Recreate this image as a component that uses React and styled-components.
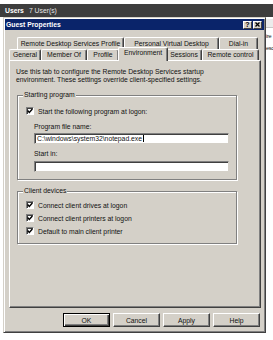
import React from "react";
import styled, { createGlobalStyle } from "styled-components";

const Global = createGlobalStyle`
  html, body { margin: 0; padding: 0; background: #fff; }
  body {
    font-family: Tahoma, "Liberation Sans", Arial, sans-serif;
    font-size: 6.8px;
    color: #111;
  }
`;

const Page = styled.div`
  width: 273px;
  height: 340px;
  overflow: hidden;
  background: #fff;
  padding-top: 4px;
  box-sizing: border-box;
`;

const TopBar = styled.div`
  height: 13px;
  background: #3d3d3d;
  display: flex;
  align-items: center;
  gap: 5px;
  padding-left: 5px;
  color: #fff;
  white-space: nowrap;
`;

const BarTitle = styled.span`
  font-weight: bold;
`;

const BarCount = styled.span`
  color: #e6e6e6;
`;

const Main = styled.div`
  display: flex;
  align-items: flex-start;
`;

const Dialog = styled.div`
  margin-left: 3px;
  width: 263px;
  box-sizing: border-box;
  background: #d4d0c8;
  border: 1px solid;
  border-color: #d4d0c8 #404040 #404040 #d4d0c8;
  box-shadow: inset 1px 1px 0 #fff, inset -1px -1px 0 #808080;
  padding: 1px;
  display: flex;
  flex-direction: column;
`;

const TitleBar = styled.div`
  height: 11px;
  background: #0a246a;
  display: flex;
  align-items: center;
  justify-content: space-between;
  padding: 0 2px 0 1px;
`;

const TitleText = styled.span`
  color: #fff;
  font-weight: bold;
  white-space: nowrap;
`;

const TitleButtons = styled.div`
  display: flex;
  gap: 1px;
`;

const TitleButton = styled.div`
  width: 9px;
  height: 8px;
  box-sizing: border-box;
  background: #d4d0c8;
  border: 1px solid;
  border-color: #fff #404040 #404040 #fff;
  display: flex;
  align-items: center;
  justify-content: center;
  font-weight: bold;
  font-size: 7px;
  line-height: 1;
  color: #000;
`;

const Body = styled.div`
  padding: 7px 3px 4px 4px;
  display: flex;
  flex-direction: column;
`;

const TabRow = styled.div`
  display: flex;
  height: ${(p) => p.$h}px;
  padding-left: ${(p) => p.$indent}px;
  align-items: flex-start;
`;

const Tab = styled.div`
  width: ${(p) => (p.$active ? p.$w + 3 : p.$w)}px;
  height: ${(p) => (p.$active ? p.$h + 3 : p.$h)}px;
  margin: ${(p) => (p.$active ? "-2px -2px -1px -1px" : "0")};
  position: relative;
  z-index: ${(p) => (p.$active ? 2 : 1)};
  box-sizing: border-box;
  background: #d4d0c8;
  border-top: 1px solid #fff;
  border-left: 1px solid #fff;
  border-right: 1px solid #404040;
  box-shadow: inset -1px 0 0 #808080;
  border-radius: 2px 2px 0 0;
  display: flex;
  align-items: ${(p) => (p.$active ? "flex-start" : "center")};
  padding-top: ${(p) => (p.$active ? "1px" : "0")};
  justify-content: center;
  white-space: nowrap;
  line-height: 8px;
`;

const Panel = styled.div`
  height: 248px;
  box-sizing: border-box;
  border: 1px solid;
  border-color: #fff #404040 #404040 #fff;
  box-shadow: inset -1px -1px 0 #808080;
  padding: 7px 6px 0 6px;
  display: flex;
  flex-direction: column;
`;

const Description = styled.p`
  margin: 0;
  line-height: 8px;
  white-space: nowrap;
`;

const GroupBox = styled.div`
  position: relative;
  margin: ${(p) => p.$top}px 0 0 1px;
  width: 220px;
  box-sizing: border-box;
  border: 1px solid #808080;
  box-shadow: inset 1px 1px 0 #fff, 1px 1px 0 #fff;
  padding: ${(p) => p.$pad};
  display: flex;
  flex-direction: column;
`;

const GroupTitle = styled.span`
  position: absolute;
  top: -5px;
  left: 5px;
  padding: 0 1px;
  background: #d4d0c8;
  line-height: 8px;
  white-space: nowrap;
`;

const CheckRow = styled.label`
  display: flex;
  align-items: center;
  gap: 4px;
  height: 8px;
  margin-top: ${(p) => p.$gap || 0}px;
  white-space: nowrap;
`;

const CheckBox = styled.span`
  width: 8px;
  height: 8px;
  box-sizing: border-box;
  background: #fff;
  border: 1px solid;
  border-color: #808080 #fff #fff #808080;
  box-shadow: inset 1px 1px 0 #404040;
  display: flex;
  align-items: center;
  justify-content: center;
  flex: none;
`;

const FieldLabel = styled.div`
  margin: ${(p) => p.$top}px 0 0 8px;
  line-height: 8px;
  white-space: nowrap;
`;

const TextBox = styled.div`
  margin: ${(p) => p.$top}px 0 0 8px;
  width: 195px;
  height: 11px;
  box-sizing: border-box;
  background: #fff;
  border: 1px solid;
  border-color: #808080 #d4d0c8 #d4d0c8 #808080;
  box-shadow: inset 1px 1px 0 #404040;
  padding: 0 1px 0 2px;
  display: flex;
  align-items: center;
  white-space: nowrap;
  line-height: 8px;
`;

const Caret = styled.span`
  display: inline-block;
  width: 1px;
  height: 7px;
  background: #000;
  margin-left: 1px;
`;

const ButtonRow = styled.div`
  display: flex;
  justify-content: flex-end;
  gap: 3px;
  margin-top: 5px;
  padding-right: 1px;
`;

const Button = styled.div`
  width: 47px;
  height: 14px;
  box-sizing: border-box;
  background: #d4d0c8;
  border: 1px solid;
  border-color: ${(p) => (p.$default ? "#000" : "#fff #404040 #404040 #fff")};
  box-shadow: ${(p) =>
    p.$default
      ? "inset 1px 1px 0 #fff, inset -1px -1px 0 #404040, inset -2px -2px 0 #808080"
      : "inset -1px -1px 0 #808080"};
  display: flex;
  align-items: center;
  justify-content: center;
`;

const Side = styled.div`
  flex: 1;
  align-self: stretch;
  display: flex;
  flex-direction: column;
  overflow: hidden;
  padding-top: 2px;
  font-size: 5.5px;
`;

const SideHeader = styled.div`
  height: 8px;
  background: #ebebeb;
  border-bottom: 1px solid #c8c8c8;
`;

const SideText = styled.div`
  margin-top: ${(p) => p.$top}px;
  line-height: 8px;
  white-space: nowrap;
  letter-spacing: -0.3px;
`;

const Check = () => (
  <svg width="6" height="6" viewBox="0 0 6 6">
    <path d="M0.6 2.6 L2.3 4.4 L5.4 1" fill="none" stroke="#000" strokeWidth="1.4" />
  </svg>
);

const Close = () => (
  <svg width="5" height="5" viewBox="0 0 5 5">
    <path d="M0.5 0.5 L4.5 4.5 M4.5 0.5 L0.5 4.5" stroke="#000" strokeWidth="1.3" />
  </svg>
);

const row1 = [
  { label: "Remote Desktop Services Profile", w: 107 },
  { label: "Personal Virtual Desktop", w: 95 },
  { label: "Dial-in", w: 39 },
];

const row2 = [
  { label: "General", w: 32 },
  { label: "Member Of", w: 46 },
  { label: "Profile", w: 32 },
  { label: "Environment", w: 47, active: true },
  { label: "Sessions", w: 36 },
  { label: "Remote control", w: 57 },
];

export default function App() {
  return (
    <>
      <Global />
      <Page>
        <TopBar>
          <BarTitle>Users</BarTitle>
          <BarCount>7 User(s)</BarCount>
        </TopBar>
        <Main>
          <Dialog>
            <TitleBar>
              <TitleText>Guest Properties</TitleText>
              <TitleButtons>
                <TitleButton>?</TitleButton>
                <TitleButton>
                  <Close />
                </TitleButton>
              </TitleButtons>
            </TitleBar>
            <Body>
              <TabRow $h={12} $indent={8}>
                {row1.map((t) => (
                  <Tab key={t.label} $w={t.w} $h={12}>
                    {t.label}
                  </Tab>
                ))}
              </TabRow>
              <TabRow $h={11} $indent={0}>
                {row2.map((t) => (
                  <Tab key={t.label} $w={t.w} $h={11} $active={t.active}>
                    {t.label}
                  </Tab>
                ))}
              </TabRow>
              <Panel>
                <Description>
                  Use this tab to configure the Remote Desktop Services startup
                  <br />
                  environment. These settings override client-specified settings.
                </Description>
                <GroupBox $top={11} $pad="11px 0 7px 8px">
                  <GroupTitle>Starting program</GroupTitle>
                  <CheckRow>
                    <CheckBox>
                      <Check />
                    </CheckBox>
                    Start the following program at logon:
                  </CheckRow>
                  <FieldLabel $top={8}>Program file name:</FieldLabel>
                  <TextBox $top={2}>
                    C:\windows\system32\notepad.exe
                    <Caret />
                  </TextBox>
                  <FieldLabel $top={6}>Start in:</FieldLabel>
                  <TextBox $top={3} />
                </GroupBox>
                <GroupBox $top={11} $pad="9px 0 8px 8px">
                  <GroupTitle>Client devices</GroupTitle>
                  <CheckRow>
                    <CheckBox>
                      <Check />
                    </CheckBox>
                    Connect client drives at logon
                  </CheckRow>
                  <CheckRow $gap={5}>
                    <CheckBox>
                      <Check />
                    </CheckBox>
                    Connect client printers at logon
                  </CheckRow>
                  <CheckRow $gap={5}>
                    <CheckBox>
                      <Check />
                    </CheckBox>
                    Default to main client printer
                  </CheckRow>
                </GroupBox>
              </Panel>
              <ButtonRow>
                <Button $default>OK</Button>
                <Button>Cancel</Button>
                <Button>Apply</Button>
                <Button>Help</Button>
              </ButtonRow>
            </Body>
          </Dialog>
          <Side>
            <SideHeader />
            <SideText $top={4}>ire</SideText>
            <SideText $top={4}>esc</SideText>
          </Side>
        </Main>
      </Page>
    </>
  );
}
